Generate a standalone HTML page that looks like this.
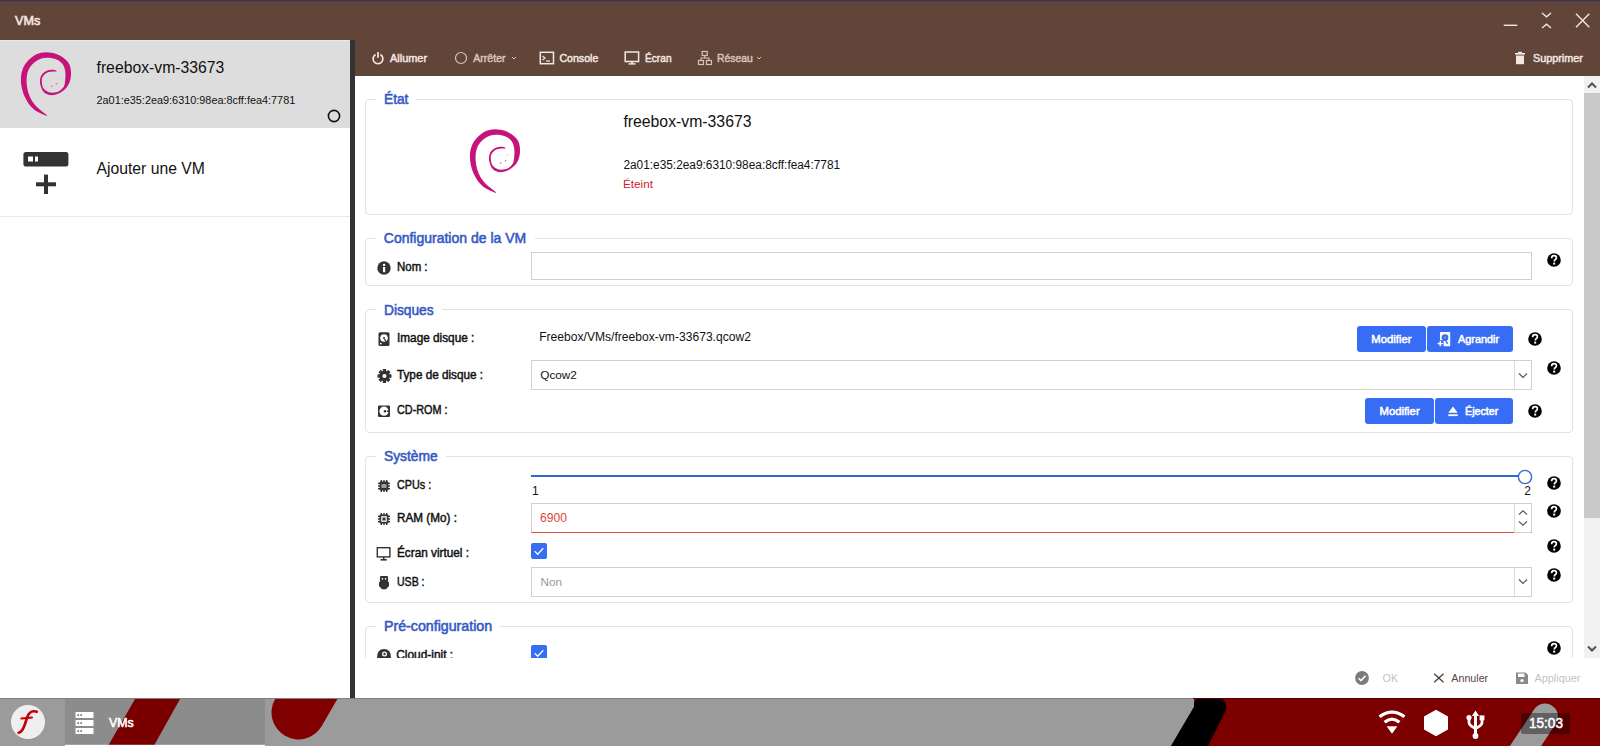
<!DOCTYPE html>
<html><head><meta charset="utf-8"><style>
html,body{margin:0;padding:0;}
body{width:1600px;height:746px;overflow:hidden;position:relative;background:#fff;font-family:"Liberation Sans",sans-serif;}
.t{position:absolute;white-space:nowrap;line-height:normal;}
svg{overflow:visible}
</style></head><body>
<div style="position:absolute;left:0px;top:0px;width:1600px;height:76px;background:#624539;"></div>
<div style="position:absolute;left:0px;top:0px;width:1600px;height:3px;background:linear-gradient(#3e2c44,#5a454e 60%,#604540);"></div>
<div class="t" style="left:14.50px;top:13.23px;font-size:13.00px;font-weight:normal;color:#f3e7e2;transform:scaleX(0.9731);transform-origin:0.00px 0;-webkit-text-stroke:0.6px #f3e7e2;">VMs</div>
<svg style="position:absolute;left:1500px;top:8px" width="96" height="26" viewBox="0 0 96 26"><line x1="3.7" y1="17.3" x2="17.3" y2="17.3" stroke="#f3e7e2" stroke-width="1.4"/><polyline points="42,5 46.5,8.8 51,5" fill="none" stroke="#f3e7e2" stroke-width="1.3"/><polyline points="42,20 46.5,16.2 51,20" fill="none" stroke="#f3e7e2" stroke-width="1.3"/><line x1="76" y1="5.7" x2="89.3" y2="19.3" stroke="#f3e7e2" stroke-width="1.4"/><line x1="89.3" y1="5.7" x2="76" y2="19.3" stroke="#f3e7e2" stroke-width="1.4"/></svg>
<div style="position:absolute;left:0px;top:40px;width:350px;height:658px;background:#fff;"></div>
<div style="position:absolute;left:0px;top:40px;width:350px;height:88px;background:#dddddd;"></div>
<div style="position:absolute;left:0px;top:40px;width:350px;height:1px;background:repeating-linear-gradient(90deg,#f4f4f4 0 1px,#dddddd 1px 2px);"></div>
<div style="position:absolute;left:0px;top:216px;width:350px;height:1px;background:#e9e9e9;"></div>
<div style="position:absolute;left:350px;top:40px;width:5px;height:658px;background:#333333;"></div>
<svg style="position:absolute;left:15px;top:48px" width="62" height="72" viewBox="0 0 642 746"><path d="M335.0,702.0 C331.3,707.8 236.2,667.0 200.0,640.0 C163.8,613.0 139.3,576.7 118.0,540.0 C96.7,503.3 81.3,460.0 72.0,420.0 C62.7,380.0 58.7,338.3 62.0,300.0 C65.3,261.7 74.3,223.3 92.0,190.0 C109.7,156.7 138.3,123.3 168.0,100.0 C197.7,76.7 234.7,58.3 270.0,50.0 C305.3,41.7 344.7,43.7 380.0,50.0 C415.3,56.3 452.3,69.7 482.0,88.0 C511.7,106.3 541.7,133.0 558.0,160.0 C574.3,187.0 578.5,218.3 580.0,250.0 C581.5,281.7 576.7,321.3 567.0,350.0 C557.3,378.7 541.5,401.7 522.0,422.0 C502.5,442.3 473.7,460.7 450.0,472.0 C426.3,483.3 401.7,489.5 380.0,490.0 C358.3,490.5 336.7,485.0 320.0,475.0 C303.3,465.0 290.3,450.8 280.0,430.0 C269.7,409.2 258.8,375.0 258.0,350.0 C257.2,325.0 263.0,299.2 275.0,280.0 C287.0,260.8 309.2,244.2 330.0,235.0 C350.8,225.8 383.0,224.2 400.0,225.0 C417.0,225.8 432.0,236.8 432.0,240.0 C432.0,243.2 416.2,241.7 400.0,244.0 C383.8,246.3 354.2,244.7 335.0,254.0 C315.8,263.3 294.5,282.3 285.0,300.0 C275.5,317.7 275.5,339.3 278.0,360.0 C280.5,380.7 284.7,407.0 300.0,424.0 C315.3,441.0 345.0,457.3 370.0,462.0 C395.0,466.7 427.3,462.3 450.0,452.0 C472.7,441.7 494.3,420.3 506.0,400.0 C517.7,379.7 517.7,356.7 520.0,330.0 C522.3,303.3 524.7,267.5 520.0,240.0 C515.3,212.5 507.0,185.3 492.0,165.0 C477.0,144.7 457.0,128.5 430.0,118.0 C403.0,107.5 362.0,101.0 330.0,102.0 C298.0,103.0 266.0,109.3 238.0,124.0 C210.0,138.7 181.0,164.0 162.0,190.0 C143.0,216.0 130.3,245.0 124.0,280.0 C117.7,315.0 118.7,361.7 124.0,400.0 C129.3,438.3 139.7,475.8 156.0,510.0 C172.3,544.2 192.2,573.0 222.0,605.0 C251.8,637.0 338.7,696.2 335.0,702.0 Z" fill="#c5137a"/><circle cx="380" cy="395" r="10" fill="#d88aa8"/><circle cx="430" cy="370" r="9" fill="#d88aa8"/><circle cx="450" cy="312" r="7" fill="#e0a8c0"/></svg>
<div class="t" style="left:96.50px;top:59.05px;font-size:15.75px;font-weight:normal;color:#111;">freebox-vm-33673</div>
<div class="t" style="left:96.50px;top:94.15px;font-size:10.89px;font-weight:normal;color:#111;">2a01:e35:2ea9:6310:98ea:8cff:fea4:7781</div>
<svg style="position:absolute;left:326px;top:108px" width="16" height="16" viewBox="0 0 16 16"><circle cx="8" cy="8" r="5.6" fill="none" stroke="#111" stroke-width="1.6"/></svg>
<svg style="position:absolute;left:20px;top:148px" width="52" height="50" viewBox="0 0 52 50"><rect x="3.4" y="4" width="45" height="14.6" rx="2.5" fill="#333"/><rect x="8" y="8.5" width="5" height="5" fill="#fff"/><rect x="15" y="8.5" width="3" height="5" fill="#fff"/><rect x="24" y="26.6" width="4" height="19.4" fill="#333"/><rect x="16" y="34.3" width="20" height="4" fill="#333"/></svg>
<div class="t" style="left:96.50px;top:159.66px;font-size:15.74px;font-weight:normal;color:#111;">Ajouter une VM</div>
<svg style="position:absolute;left:370px;top:50px" width="16" height="16" viewBox="0 0 16 16"><path d="M5.6,4.6 A4.9,4.9 0 1 0 10.4,4.6" fill="none" stroke="#f3e7e2" stroke-width="1.7"/><line x1="8" y1="2" x2="8" y2="7.8" stroke="#f3e7e2" stroke-width="1.7"/></svg>
<div class="t" style="left:390.23px;top:52.21px;font-size:10.60px;font-weight:normal;color:#f3e7e2;transform:scaleX(1.0311);transform-origin:0.00px 0;-webkit-text-stroke:0.45px #f3e7e2;">Allumer</div>
<svg style="position:absolute;left:453px;top:50px" width="16" height="16" viewBox="0 0 16 16"><circle cx="8" cy="8" r="5.5" fill="none" stroke="#d8c3bb" stroke-width="1.2"/></svg>
<div class="t" style="left:473.23px;top:52.21px;font-size:10.60px;font-weight:normal;color:#d8c3bb;-webkit-text-stroke:0.45px #d8c3bb;">Arrêter</div>
<svg style="position:absolute;left:510px;top:55px" width="8" height="6" viewBox="0 0 8 6"><polyline points="2,2 4,4 6,2" fill="none" stroke="#d8c3bb" stroke-width="1"/></svg>
<svg style="position:absolute;left:538px;top:50px" width="18" height="16" viewBox="0 0 18 16"><rect x="2.3" y="2.3" width="13.2" height="11.4" fill="none" stroke="#f3e7e2" stroke-width="1.5"/><polyline points="4.5,6 7,8 4.5,10" fill="none" stroke="#f3e7e2" stroke-width="1.2"/><line x1="8" y1="11" x2="12" y2="11" stroke="#f3e7e2" stroke-width="1.2"/></svg>
<div class="t" style="left:559.43px;top:52.21px;font-size:10.60px;font-weight:normal;color:#f3e7e2;-webkit-text-stroke:0.45px #f3e7e2;">Console</div>
<svg style="position:absolute;left:623px;top:50px" width="18" height="16" viewBox="0 0 18 16"><rect x="2.2" y="2" width="13.4" height="9.5" fill="none" stroke="#f3e7e2" stroke-width="1.5"/><rect x="8" y="11.5" width="2" height="2" fill="#f3e7e2"/><rect x="5.5" y="13.2" width="7" height="1.4" fill="#f3e7e2"/></svg>
<div class="t" style="left:644.52px;top:52.21px;font-size:10.60px;font-weight:normal;color:#f3e7e2;transform:scaleX(0.9597);transform-origin:0.00px 0;-webkit-text-stroke:0.45px #f3e7e2;">Écran</div>
<svg style="position:absolute;left:696px;top:49px" width="18" height="18" viewBox="0 0 18 18"><rect x="6.2" y="2.5" width="5" height="4" fill="none" stroke="#d8c3bb" stroke-width="1.2"/><rect x="2.5" y="11.5" width="5" height="4" fill="none" stroke="#d8c3bb" stroke-width="1.2"/><rect x="10.5" y="11.5" width="5" height="4" fill="none" stroke="#d8c3bb" stroke-width="1.2"/><polyline points="8.7,6.5 8.7,9 5,9 5,11.5" fill="none" stroke="#d8c3bb" stroke-width="1.1"/><polyline points="8.7,9 13,9 13,11.5" fill="none" stroke="#d8c3bb" stroke-width="1.1"/></svg>
<div class="t" style="left:716.93px;top:52.21px;font-size:10.60px;font-weight:normal;color:#d8c3bb;transform:scaleX(0.9817);transform-origin:0.00px 0;-webkit-text-stroke:0.45px #d8c3bb;">Réseau</div>
<svg style="position:absolute;left:755px;top:55px" width="8" height="6" viewBox="0 0 8 6"><polyline points="2,2 4,4 6,2" fill="none" stroke="#d8c3bb" stroke-width="1"/></svg>
<svg style="position:absolute;left:1513px;top:50px" width="14" height="16" viewBox="0 0 14 16"><rect x="2" y="3" width="10" height="1.6" fill="#f3e7e2"/><rect x="5" y="1.8" width="4" height="1.5" fill="#f3e7e2"/><path d="M3,5.4 H11 V13.2 Q11,14.2 10,14.2 H4 Q3,14.2 3,13.2 Z" fill="#f3e7e2"/></svg>
<div class="t" style="left:1532.52px;top:52.21px;font-size:10.60px;font-weight:normal;color:#f3e7e2;transform:scaleX(1.0211);transform-origin:0.00px 0;-webkit-text-stroke:0.45px #f3e7e2;">Supprimer</div>
<div style="position:absolute;left:355px;top:76px;width:1245px;height:622px;background:#fff;"></div>
<div style="position:absolute;left:365px;top:99px;width:1208px;height:116px;box-sizing:border-box;border:1px solid #e2e2e2;border-radius:4px"></div>
<div style="position:absolute;left:376px;top:97px;width:40.39999999999998px;height:5px;background:#fff;"></div>
<div class="t" style="left:383.77px;top:91.33px;font-size:14.00px;font-weight:normal;color:#3559c4;transform:scaleX(0.9811);transform-origin:0.00px 0;-webkit-text-stroke:0.55px #3559c4;">État</div>
<svg style="position:absolute;left:463.7px;top:125.1px" width="62" height="72" viewBox="0 0 642 746"><path d="M335.0,702.0 C331.3,707.8 236.2,667.0 200.0,640.0 C163.8,613.0 139.3,576.7 118.0,540.0 C96.7,503.3 81.3,460.0 72.0,420.0 C62.7,380.0 58.7,338.3 62.0,300.0 C65.3,261.7 74.3,223.3 92.0,190.0 C109.7,156.7 138.3,123.3 168.0,100.0 C197.7,76.7 234.7,58.3 270.0,50.0 C305.3,41.7 344.7,43.7 380.0,50.0 C415.3,56.3 452.3,69.7 482.0,88.0 C511.7,106.3 541.7,133.0 558.0,160.0 C574.3,187.0 578.5,218.3 580.0,250.0 C581.5,281.7 576.7,321.3 567.0,350.0 C557.3,378.7 541.5,401.7 522.0,422.0 C502.5,442.3 473.7,460.7 450.0,472.0 C426.3,483.3 401.7,489.5 380.0,490.0 C358.3,490.5 336.7,485.0 320.0,475.0 C303.3,465.0 290.3,450.8 280.0,430.0 C269.7,409.2 258.8,375.0 258.0,350.0 C257.2,325.0 263.0,299.2 275.0,280.0 C287.0,260.8 309.2,244.2 330.0,235.0 C350.8,225.8 383.0,224.2 400.0,225.0 C417.0,225.8 432.0,236.8 432.0,240.0 C432.0,243.2 416.2,241.7 400.0,244.0 C383.8,246.3 354.2,244.7 335.0,254.0 C315.8,263.3 294.5,282.3 285.0,300.0 C275.5,317.7 275.5,339.3 278.0,360.0 C280.5,380.7 284.7,407.0 300.0,424.0 C315.3,441.0 345.0,457.3 370.0,462.0 C395.0,466.7 427.3,462.3 450.0,452.0 C472.7,441.7 494.3,420.3 506.0,400.0 C517.7,379.7 517.7,356.7 520.0,330.0 C522.3,303.3 524.7,267.5 520.0,240.0 C515.3,212.5 507.0,185.3 492.0,165.0 C477.0,144.7 457.0,128.5 430.0,118.0 C403.0,107.5 362.0,101.0 330.0,102.0 C298.0,103.0 266.0,109.3 238.0,124.0 C210.0,138.7 181.0,164.0 162.0,190.0 C143.0,216.0 130.3,245.0 124.0,280.0 C117.7,315.0 118.7,361.7 124.0,400.0 C129.3,438.3 139.7,475.8 156.0,510.0 C172.3,544.2 192.2,573.0 222.0,605.0 C251.8,637.0 338.7,696.2 335.0,702.0 Z" fill="#c5137a"/><circle cx="380" cy="395" r="10" fill="#d88aa8"/><circle cx="430" cy="370" r="9" fill="#d88aa8"/><circle cx="450" cy="312" r="7" fill="#e0a8c0"/></svg>
<div class="t" style="left:623.40px;top:113.46px;font-size:15.79px;font-weight:normal;color:#111;">freebox-vm-33673</div>
<div class="t" style="left:623.40px;top:158.25px;font-size:11.87px;font-weight:normal;color:#111;">2a01:e35:2ea9:6310:98ea:8cff:fea4:7781</div>
<div class="t" style="left:623.00px;top:176.97px;font-size:11.74px;font-weight:normal;color:#d0202a;">Éteint</div>
<div style="position:absolute;left:365px;top:238px;width:1208px;height:48px;box-sizing:border-box;border:1px solid #e2e2e2;border-radius:4px"></div>
<div style="position:absolute;left:376px;top:236px;width:159px;height:5px;background:#fff;"></div>
<div class="t" style="left:383.77px;top:229.83px;font-size:14.00px;font-weight:normal;color:#3559c4;-webkit-text-stroke:0.55px #3559c4;">Configuration de la VM</div>
<svg style="position:absolute;left:376px;top:260px" width="16" height="16" viewBox="0 0 16 16"><circle cx="8" cy="8" r="6.7" fill="#333"/><rect x="7" y="7" width="2.2" height="5.2" fill="#fff"/><circle cx="8.1" cy="4.9" r="1.2" fill="#fff"/></svg>
<div class="t" style="left:396.73px;top:260.13px;font-size:11.90px;font-weight:normal;color:#111;transform:scaleX(0.9633);transform-origin:0.00px 0;-webkit-text-stroke:0.45px #111;">Nom :</div>
<div style="position:absolute;left:531px;top:252px;width:1001px;height:28px;box-sizing:border-box;border:1px solid #d0d0d0;background:#fff;"></div>
<svg style="position:absolute;left:1546px;top:252px" width="16" height="16" viewBox="0 0 16 16"><circle cx="8" cy="8" r="6.8" fill="#000"/><path d="M5.6,6.2 Q5.6,3.6 8,3.6 Q10.4,3.6 10.4,5.8 Q10.4,7 9.1,7.8 Q8.3,8.3 8.3,9.6" fill="none" stroke="#fff" stroke-width="1.7"/><rect x="7.2" y="10.6" width="2" height="2" fill="#fff"/></svg>
<div style="position:absolute;left:365px;top:309px;width:1208px;height:124px;box-sizing:border-box;border:1px solid #e2e2e2;border-radius:4px"></div>
<div style="position:absolute;left:376px;top:307px;width:65.60000000000002px;height:5px;background:#fff;"></div>
<div class="t" style="left:383.77px;top:301.73px;font-size:14.00px;font-weight:normal;color:#3559c4;transform:scaleX(0.9810);transform-origin:0.00px 0;-webkit-text-stroke:0.55px #3559c4;">Disques</div>
<svg style="position:absolute;left:376px;top:330px" width="16" height="18" viewBox="0 0 16 18"><rect x="2.5" y="2.3" width="11" height="13.6" rx="1.5" fill="#333"/><circle cx="8" cy="8" r="3.8" fill="#fff"/><circle cx="8" cy="8" r="1" fill="#333"/><circle cx="4.8" cy="13.6" r="0.9" fill="#fff"/><line x1="8.5" y1="9" x2="10.5" y2="12.5" stroke="#333" stroke-width="1.2"/></svg>
<div class="t" style="left:396.73px;top:331.23px;font-size:11.90px;font-weight:normal;color:#111;transform:scaleX(0.9909);transform-origin:0.00px 0;-webkit-text-stroke:0.45px #111;">Image disque :</div>
<div class="t" style="left:539.20px;top:330.15px;font-size:12.10px;font-weight:normal;color:#111;">Freebox/VMs/freebox-vm-33673.qcow2</div>
<div style="position:absolute;left:1357px;top:326px;width:68.59999999999991px;height:26px;background:#376cf4;border-radius:3px"></div>
<div style="position:absolute;left:1427.4px;top:326px;width:85.59999999999991px;height:26px;background:#376cf4;border-radius:3px"></div>
<div class="t" style="left:1371.28px;top:332.87px;font-size:11.30px;font-weight:normal;color:#fff;-webkit-text-stroke:0.55px #fff;">Modifier</div>
<svg style="position:absolute;left:1430px;top:325px" width="30" height="30" viewBox="0 0 30 30"><rect x="10" y="7" width="10.2" height="14.2" rx="0.8" fill="#fff"/><rect x="7" y="15.2" width="6.6" height="7" fill="#376cf4"/><circle cx="15" cy="12.6" r="3.4" fill="#376cf4"/><circle cx="15" cy="12.6" r="1" fill="#9ab"/><line x1="15.2" y1="14.5" x2="17.6" y2="18.8" stroke="#376cf4" stroke-width="1.5"/><line x1="7.6" y1="18.6" x2="12.9" y2="18.6" stroke="#fff" stroke-width="1.4"/><line x1="10.25" y1="16" x2="10.25" y2="21.2" stroke="#fff" stroke-width="1.4"/></svg>
<div class="t" style="left:1457.58px;top:332.87px;font-size:11.30px;font-weight:normal;color:#fff;transform:scaleX(0.9610);transform-origin:0.00px 0;-webkit-text-stroke:0.55px #fff;">Agrandir</div>
<svg style="position:absolute;left:1527px;top:331px" width="16" height="16" viewBox="0 0 16 16"><circle cx="8" cy="8" r="6.8" fill="#000"/><path d="M5.6,6.2 Q5.6,3.6 8,3.6 Q10.4,3.6 10.4,5.8 Q10.4,7 9.1,7.8 Q8.3,8.3 8.3,9.6" fill="none" stroke="#fff" stroke-width="1.7"/><rect x="7.2" y="10.6" width="2" height="2" fill="#fff"/></svg>
<svg style="position:absolute;left:376px;top:367px" width="16" height="18" viewBox="0 0 16 18"><g transform="translate(8.5,9)"><circle r="5" fill="#333"/><rect x="-1.7" y="-7" width="3.4" height="3.6" rx="0.5" fill="#333" transform="rotate(0)"/><rect x="-1.7" y="-7" width="3.4" height="3.6" rx="0.5" fill="#333" transform="rotate(45)"/><rect x="-1.7" y="-7" width="3.4" height="3.6" rx="0.5" fill="#333" transform="rotate(90)"/><rect x="-1.7" y="-7" width="3.4" height="3.6" rx="0.5" fill="#333" transform="rotate(135)"/><rect x="-1.7" y="-7" width="3.4" height="3.6" rx="0.5" fill="#333" transform="rotate(180)"/><rect x="-1.7" y="-7" width="3.4" height="3.6" rx="0.5" fill="#333" transform="rotate(225)"/><rect x="-1.7" y="-7" width="3.4" height="3.6" rx="0.5" fill="#333" transform="rotate(270)"/><rect x="-1.7" y="-7" width="3.4" height="3.6" rx="0.5" fill="#333" transform="rotate(315)"/><circle r="2.1" fill="#fff"/></g></svg>
<div class="t" style="left:396.73px;top:368.23px;font-size:11.90px;font-weight:normal;color:#111;transform:scaleX(0.9852);transform-origin:0.00px 0;-webkit-text-stroke:0.45px #111;">Type de disque :</div>
<div style="position:absolute;left:531px;top:360px;width:1001px;height:30px;box-sizing:border-box;border:1px solid #d0d0d0;background:#fff;"></div>
<div style="position:absolute;left:1514px;top:361px;width:1px;height:28px;background:#dcdcdc;"></div>
<svg style="position:absolute;left:1516px;top:370px" width="14" height="12" viewBox="0 0 14 12"><polyline points="3,3.5 7,7.5 11,3.5" fill="none" stroke="#555" stroke-width="1.2"/></svg>
<div class="t" style="left:540.30px;top:367.85px;font-size:11.77px;font-weight:normal;color:#111;">Qcow2</div>
<svg style="position:absolute;left:1546px;top:360px" width="16" height="16" viewBox="0 0 16 16"><circle cx="8" cy="8" r="6.8" fill="#000"/><path d="M5.6,6.2 Q5.6,3.6 8,3.6 Q10.4,3.6 10.4,5.8 Q10.4,7 9.1,7.8 Q8.3,8.3 8.3,9.6" fill="none" stroke="#fff" stroke-width="1.7"/><rect x="7.2" y="10.6" width="2" height="2" fill="#fff"/></svg>
<svg style="position:absolute;left:376px;top:403px" width="16" height="16" viewBox="0 0 16 16"><rect x="2" y="2.4" width="12" height="11.6" rx="1.2" fill="#333"/><circle cx="8" cy="8.2" r="4.6" fill="#fff"/><circle cx="9" cy="8.2" r="1.2" fill="#333"/><rect x="11" y="7.4" width="3" height="1.6" fill="#333"/></svg>
<div class="t" style="left:396.73px;top:402.83px;font-size:11.90px;font-weight:normal;color:#111;transform:scaleX(0.9106);transform-origin:0.00px 0;-webkit-text-stroke:0.45px #111;">CD-ROM :</div>
<div style="position:absolute;left:1365.2px;top:398px;width:68.5px;height:26px;background:#376cf4;border-radius:3px"></div>
<div style="position:absolute;left:1435.2px;top:398px;width:77.79999999999995px;height:26px;background:#376cf4;border-radius:3px"></div>
<div class="t" style="left:1379.48px;top:404.87px;font-size:11.30px;font-weight:normal;color:#fff;-webkit-text-stroke:0.55px #fff;">Modifier</div>
<svg style="position:absolute;left:1446px;top:403px" width="14" height="16" viewBox="0 0 14 16"><path d="M2.3,9.8 L7,3.5 L11.7,9.8 Z" fill="#fff"/><rect x="2.3" y="11.3" width="9.4" height="1.8" fill="#fff"/></svg>
<div class="t" style="left:1465.28px;top:404.87px;font-size:11.30px;font-weight:normal;color:#fff;transform:scaleX(0.9490);transform-origin:0.00px 0;-webkit-text-stroke:0.55px #fff;">Éjecter</div>
<svg style="position:absolute;left:1527px;top:403px" width="16" height="16" viewBox="0 0 16 16"><circle cx="8" cy="8" r="6.8" fill="#000"/><path d="M5.6,6.2 Q5.6,3.6 8,3.6 Q10.4,3.6 10.4,5.8 Q10.4,7 9.1,7.8 Q8.3,8.3 8.3,9.6" fill="none" stroke="#fff" stroke-width="1.7"/><rect x="7.2" y="10.6" width="2" height="2" fill="#fff"/></svg>
<div style="position:absolute;left:365px;top:456px;width:1208px;height:147px;box-sizing:border-box;border:1px solid #e2e2e2;border-radius:4px"></div>
<div style="position:absolute;left:376px;top:454px;width:70px;height:5px;background:#fff;"></div>
<div class="t" style="left:383.77px;top:448.33px;font-size:14.00px;font-weight:normal;color:#3559c4;transform:scaleX(0.9851);transform-origin:0.00px 0;-webkit-text-stroke:0.55px #3559c4;">Système</div>
<svg style="position:absolute;left:376px;top:478px" width="16" height="16" viewBox="0 0 16 16"><rect x="4.6" y="2" width="1.4" height="12" fill="#333"/><rect x="2" y="4.6" width="12" height="1.4" fill="#333"/><rect x="7.3" y="2" width="1.4" height="12" fill="#333"/><rect x="2" y="7.3" width="12" height="1.4" fill="#333"/><rect x="10.0" y="2" width="1.4" height="12" fill="#333"/><rect x="2" y="10.0" width="12" height="1.4" fill="#333"/><rect x="3.6" y="3.6" width="8.8" height="8.8" rx="1.2" fill="#333"/><rect x="5.6" y="6.4" width="4.8" height="3.2" fill="#ddd"/><rect x="6.4" y="7.4" width="1.2" height="1.2" fill="#333"/><rect x="8.4" y="7.4" width="1.2" height="1.2" fill="#333"/></svg>
<div class="t" style="left:396.73px;top:478.23px;font-size:11.90px;font-weight:normal;color:#111;transform:scaleX(0.9067);transform-origin:0.00px 0;-webkit-text-stroke:0.45px #111;">CPUs :</div>
<div style="position:absolute;left:531px;top:475px;width:994px;height:2px;background:#3667c9;"></div>
<svg style="position:absolute;left:1516px;top:468px" width="18" height="18" viewBox="0 0 18 18"><circle cx="9" cy="9" r="6.6" fill="#fff" stroke="#3a6ad0" stroke-width="1.4"/></svg>
<div class="t" style="left:532.00px;top:483.84px;font-size:12.00px;font-weight:normal;color:#111;">1</div>
<div class="t" style="left:1524.30px;top:484.14px;font-size:12.00px;font-weight:normal;color:#111;">2</div>
<svg style="position:absolute;left:1546px;top:475px" width="16" height="16" viewBox="0 0 16 16"><circle cx="8" cy="8" r="6.8" fill="#000"/><path d="M5.6,6.2 Q5.6,3.6 8,3.6 Q10.4,3.6 10.4,5.8 Q10.4,7 9.1,7.8 Q8.3,8.3 8.3,9.6" fill="none" stroke="#fff" stroke-width="1.7"/><rect x="7.2" y="10.6" width="2" height="2" fill="#fff"/></svg>
<svg style="position:absolute;left:376px;top:511px" width="16" height="16" viewBox="0 0 16 16"><rect x="4.6" y="2" width="1.4" height="12" fill="#333"/><rect x="2" y="4.6" width="12" height="1.4" fill="#333"/><rect x="7.3" y="2" width="1.4" height="12" fill="#333"/><rect x="2" y="7.3" width="12" height="1.4" fill="#333"/><rect x="10.0" y="2" width="1.4" height="12" fill="#333"/><rect x="2" y="10.0" width="12" height="1.4" fill="#333"/><rect x="3.6" y="3.6" width="8.8" height="8.8" rx="1" fill="#333"/><rect x="5.2" y="5.2" width="5.6" height="5.6" fill="#fff"/><rect x="6.5" y="6.5" width="3" height="3" fill="#333"/></svg>
<div class="t" style="left:396.73px;top:511.23px;font-size:11.90px;font-weight:normal;color:#111;transform:scaleX(0.9859);transform-origin:0.00px 0;-webkit-text-stroke:0.45px #111;">RAM (Mo) :</div>
<div style="position:absolute;left:531px;top:503px;width:1001px;height:30px;box-sizing:border-box;border:1px solid #d0d0d0;background:#fff;border-bottom:1.5px solid #d9503f;"></div>
<div style="position:absolute;left:1514px;top:504px;width:1px;height:27.5px;background:#dcdcdc;"></div>
<div style="position:absolute;left:1514px;top:531.5px;width:17px;height:1.5px;background:#d0d0d0;"></div>
<svg style="position:absolute;left:1516px;top:506px" width="14" height="24" viewBox="0 0 14 24"><polyline points="3,8.5 7,4.8 11,8.5" fill="none" stroke="#555" stroke-width="1.1"/><polyline points="3,15.5 7,19.2 11,15.5" fill="none" stroke="#555" stroke-width="1.1"/></svg>
<div class="t" style="left:540.00px;top:511.02px;font-size:12.13px;font-weight:normal;color:#e0453a;">6900</div>
<svg style="position:absolute;left:1546px;top:503px" width="16" height="16" viewBox="0 0 16 16"><circle cx="8" cy="8" r="6.8" fill="#000"/><path d="M5.6,6.2 Q5.6,3.6 8,3.6 Q10.4,3.6 10.4,5.8 Q10.4,7 9.1,7.8 Q8.3,8.3 8.3,9.6" fill="none" stroke="#fff" stroke-width="1.7"/><rect x="7.2" y="10.6" width="2" height="2" fill="#fff"/></svg>
<svg style="position:absolute;left:375px;top:545px" width="18" height="18" viewBox="0 0 18 18"><rect x="2.3" y="2.7" width="12.6" height="9.2" fill="none" stroke="#333" stroke-width="1.4"/><rect x="7.9" y="12" width="1.6" height="2.4" fill="#333"/><rect x="5.6" y="14" width="6.2" height="1.6" fill="#333"/></svg>
<div class="t" style="left:396.73px;top:546.23px;font-size:11.90px;font-weight:normal;color:#111;transform:scaleX(0.9901);transform-origin:0.00px 0;-webkit-text-stroke:0.45px #111;">Écran virtuel :</div>
<svg style="position:absolute;left:531px;top:543px" width="16" height="16" viewBox="0 0 16 16"><rect width="16" height="16" rx="2" fill="#376cf4"/><polyline points="3.8,8.3 6.7,11.2 12.3,5.2" fill="none" stroke="#fff" stroke-width="1.3"/></svg>
<svg style="position:absolute;left:1546px;top:538px" width="16" height="16" viewBox="0 0 16 16"><circle cx="8" cy="8" r="6.8" fill="#000"/><path d="M5.6,6.2 Q5.6,3.6 8,3.6 Q10.4,3.6 10.4,5.8 Q10.4,7 9.1,7.8 Q8.3,8.3 8.3,9.6" fill="none" stroke="#fff" stroke-width="1.7"/><rect x="7.2" y="10.6" width="2" height="2" fill="#fff"/></svg>
<svg style="position:absolute;left:376px;top:574px" width="16" height="18" viewBox="0 0 16 18"><rect x="4" y="2" width="8" height="10" rx="1" fill="#333"/><rect x="5.8" y="4" width="1.3" height="1.6" fill="#fff"/><rect x="8.9" y="4" width="1.3" height="1.6" fill="#fff"/><path d="M3,8 H13 V12 L10,15.3 H6 L3,12 Z" fill="#333"/></svg>
<div class="t" style="left:396.73px;top:575.13px;font-size:11.90px;font-weight:normal;color:#111;transform:scaleX(0.8870);transform-origin:0.00px 0;-webkit-text-stroke:0.45px #111;">USB :</div>
<div style="position:absolute;left:531px;top:567px;width:1001px;height:30px;box-sizing:border-box;border:1px solid #d0d0d0;background:#fff;"></div>
<div style="position:absolute;left:1514px;top:568px;width:1px;height:28px;background:#dcdcdc;"></div>
<svg style="position:absolute;left:1516px;top:576px" width="14" height="12" viewBox="0 0 14 12"><polyline points="3,3.5 7,7.5 11,3.5" fill="none" stroke="#555" stroke-width="1.2"/></svg>
<div class="t" style="left:540.50px;top:575.30px;font-size:11.72px;font-weight:normal;color:#9a9a9a;">Non</div>
<svg style="position:absolute;left:1546px;top:567px" width="16" height="16" viewBox="0 0 16 16"><circle cx="8" cy="8" r="6.8" fill="#000"/><path d="M5.6,6.2 Q5.6,3.6 8,3.6 Q10.4,3.6 10.4,5.8 Q10.4,7 9.1,7.8 Q8.3,8.3 8.3,9.6" fill="none" stroke="#fff" stroke-width="1.7"/><rect x="7.2" y="10.6" width="2" height="2" fill="#fff"/></svg>
<div style="position:absolute;left:365px;top:626px;width:1208px;height:74px;box-sizing:border-box;border:1px solid #e2e2e2;border-radius:4px"></div>
<div style="position:absolute;left:376px;top:624px;width:124px;height:5px;background:#fff;"></div>
<div class="t" style="left:383.77px;top:618.08px;font-size:14.00px;font-weight:normal;color:#3559c4;transform:scaleX(1.0144);transform-origin:0.00px 0;-webkit-text-stroke:0.55px #3559c4;">Pré-configuration</div>
<svg style="position:absolute;left:375px;top:645px" width="18" height="16" viewBox="0 0 18 16"><path d="M2,13 Q2,4 9,4 Q16,4 16,13 Z" fill="#333"/><circle cx="9.5" cy="9" r="2.5" fill="#fff"/><circle cx="9.5" cy="9" r="1.2" fill="#333"/></svg>
<div class="t" style="left:396.23px;top:647.73px;font-size:11.90px;font-weight:normal;color:#111;-webkit-text-stroke:0.45px #111;">Cloud-init :</div>
<svg style="position:absolute;left:531px;top:645px" width="16" height="16" viewBox="0 0 16 16"><rect width="16" height="16" rx="2" fill="#376cf4"/><polyline points="3.8,8.3 6.7,11.2 12.3,5.2" fill="none" stroke="#fff" stroke-width="1.3"/></svg>
<svg style="position:absolute;left:1546px;top:640px" width="16" height="16" viewBox="0 0 16 16"><circle cx="8" cy="8" r="6.8" fill="#000"/><path d="M5.6,6.2 Q5.6,3.6 8,3.6 Q10.4,3.6 10.4,5.8 Q10.4,7 9.1,7.8 Q8.3,8.3 8.3,9.6" fill="none" stroke="#fff" stroke-width="1.7"/><rect x="7.2" y="10.6" width="2" height="2" fill="#fff"/></svg>
<div style="position:absolute;left:355px;top:658px;width:1228px;height:40px;background:#fff;"></div>
<div style="position:absolute;left:1583.5px;top:76px;width:16.5px;height:582px;background:#f1f1f1;"></div>
<div style="position:absolute;left:1583.5px;top:93px;width:16.5px;height:425px;background:#c9c9c9;"></div>
<svg style="position:absolute;left:1584px;top:78px" width="16" height="14" viewBox="0 0 16 14"><polyline points="4,9.5 8,5.5 12,9.5" fill="none" stroke="#505050" stroke-width="2"/></svg>
<svg style="position:absolute;left:1584px;top:642px" width="16" height="14" viewBox="0 0 16 14"><polyline points="4,4.5 8,8.5 12,4.5" fill="none" stroke="#505050" stroke-width="2"/></svg>
<svg style="position:absolute;left:1354px;top:670px" width="16" height="16" viewBox="0 0 16 16"><circle cx="8" cy="8" r="6.9" fill="#7b7b7b"/><polyline points="4.6,8.2 7,10.6 11.6,5.8" fill="none" stroke="#fff" stroke-width="1.6"/></svg>
<div class="t" style="left:1382.60px;top:672.03px;font-size:10.80px;font-weight:normal;color:#c2c2c2;letter-spacing:0px;">OK</div>
<svg style="position:absolute;left:1431px;top:670px" width="16" height="16" viewBox="0 0 16 16"><line x1="3.2" y1="3.7" x2="12.5" y2="12.3" stroke="#4a3c3c" stroke-width="1.3"/><line x1="12.5" y1="3.7" x2="3.2" y2="12.3" stroke="#4a3c3c" stroke-width="1.3"/></svg>
<div class="t" style="left:1451.30px;top:672.11px;font-size:10.71px;font-weight:normal;color:#5a4646;">Annuler</div>
<svg style="position:absolute;left:1514px;top:670px" width="16" height="16" viewBox="0 0 16 16"><path d="M2,2.5 H11.5 L14,5 V14 H2 Z" fill="#8a8a8a"/><rect x="4" y="3.6" width="6.4" height="3.4" fill="#fff"/><circle cx="8" cy="10.6" r="1.7" fill="#fff"/></svg>
<div class="t" style="left:1534.50px;top:671.95px;font-size:10.89px;font-weight:normal;color:#c2c2c2;">Appliquer</div>
<div style="position:absolute;left:0px;top:698px;width:1600px;height:48px;background:#9b9b9b;"></div>
<svg style="position:absolute;left:0px;top:698px" width="1600" height="48" viewBox="0 0 1600 48"><defs><clipPath id="tbc"><rect x="0" y="0" width="1600" height="48"/></clipPath></defs><g clip-path="url(#tbc)"><rect x="65" y="0" width="200" height="48" fill="#8c8c8c"/><polygon points="108,48 135.6,0 180.6,0 153.75,48" fill="#7a0000"/><line x1="298.5" y1="14.4" x2="328.4" y2="-37.6" stroke="#800000" stroke-width="54" stroke-linecap="round"/><polygon points="1194,0 1194,9 1171,48 1600,48 1600,0" fill="#7d0000"/><path d="M1199,0 L1220,0 Q1227,2 1226,12 L1208,48 L1171,48 L1194,9 L1194,6 Q1195,1 1199,0 Z" fill="#000"/><line x1="1517.5" y1="60" x2="1545" y2="18.5" stroke="#9b9b9b" stroke-width="26" stroke-linecap="round"/><rect x="0" y="0" width="1193" height="1" fill="#808080"/><rect x="1193" y="0" width="407" height="1" fill="#5a0000"/><rect x="65" y="46.8" width="200" height="1.2" fill="#fff"/></g></svg>
<svg style="position:absolute;left:11px;top:705px" width="34" height="34" viewBox="0 0 34 34"><circle cx="17" cy="17" r="17" fill="#efefef"/><path d="M7.6,27.8 Q11.5,27 14,19 L16.5,11.5 Q18.5,6.5 22.5,6.3 Q24.5,6.2 25.8,6.8" fill="none" stroke="#c40000" stroke-width="2.6" stroke-linecap="round"/><path d="M10.4,13.6 L21,12.6" stroke="#c40000" stroke-width="2" stroke-linecap="round"/></svg>
<svg style="position:absolute;left:75px;top:712px" width="19" height="22" viewBox="0 0 19 22"><rect x="0.5" y="0" width="18" height="6" rx="0.5" fill="#fff"/><rect x="0.5" y="8" width="18" height="6" rx="0.5" fill="#fff"/><rect x="0.5" y="16" width="18" height="6" rx="0.5" fill="#fff"/><rect x="2.3" y="2" width="1.8" height="2" fill="#8c8c8c"/><rect x="5.3" y="2" width="1.8" height="2" fill="#8c8c8c"/><rect x="2.3" y="10" width="1.8" height="2" fill="#8c8c8c"/><rect x="5.3" y="10" width="1.8" height="2" fill="#8c8c8c"/><rect x="2.3" y="18" width="1.8" height="2" fill="#8c8c8c"/><rect x="5.3" y="18" width="1.8" height="2" fill="#8c8c8c"/></svg>
<div class="t" style="left:109.05px;top:715.32px;font-size:12.80px;font-weight:normal;color:#fff;transform:scaleX(0.9629);transform-origin:0.00px 0;-webkit-text-stroke:0.6px #fff;">VMs</div>
<svg style="position:absolute;left:1376px;top:709px" width="32" height="28" viewBox="0 0 32 28"><path d="M3.5,7.8 Q16,-1.5 28.5,7.8" fill="none" stroke="#fff" stroke-width="3.3"/><path d="M8.6,13.2 Q16,7 23.4,13.2" fill="none" stroke="#fff" stroke-width="3.3"/><polygon points="10.6,17.2 21.4,17.2 16,24.8" fill="#fff"/></svg>
<svg style="position:absolute;left:1422px;top:708px" width="28" height="30" viewBox="0 0 28 30"><polygon points="14,1.8 26,8.5 26,21.5 14,28.2 2,21.5 2,8.5" fill="#fff"/></svg>
<svg style="position:absolute;left:1464px;top:709px" width="24" height="31" viewBox="0 0 24 31"><path d="M11.5,1.5 L15.2,7 H13 V27 H10 V7 H7.8 Z" fill="#fff"/><path d="M5,9.5 V13.5 Q5,16.5 11.5,19.5 Q18,16.5 18,13.5 V9.5" fill="none" stroke="#fff" stroke-width="2.8"/><circle cx="5" cy="8.6" r="2.6" fill="#fff"/><rect x="15.6" y="6.4" width="4.8" height="4.8" fill="#fff"/><circle cx="11.5" cy="27" r="2.9" fill="#fff"/></svg>
<div style="position:absolute;left:1520.8px;top:713px;width:49.200000000000045px;height:21px;background:rgba(0,0,0,0.38);border-radius:2px"></div>
<div class="t" style="left:1529.00px;top:715.15px;font-size:14.20px;font-weight:normal;color:#fff;transform:scaleX(0.9558);transform-origin:0.00px 0;-webkit-text-stroke:0.5px #fff;">15:03</div>
</body></html>
